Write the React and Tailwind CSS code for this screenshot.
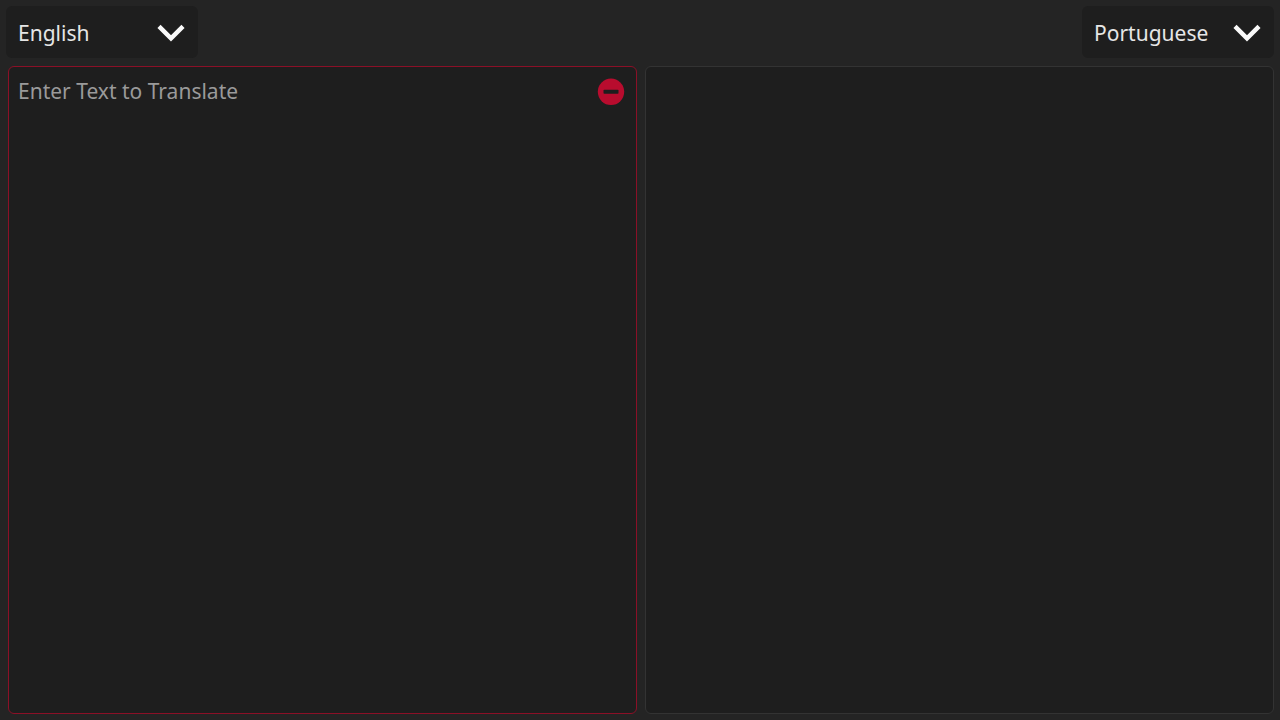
import { useState } from "react";

const LANGUAGES = ["English", "Portuguese", "Spanish", "French", "German", "Italian"];

function LanguageSelect({ label, value, onChange }) {
  return (
    <div className="relative w-48">
      <select
        aria-label={label}
        value={value}
        onChange={(event) => onChange(event.target.value)}
        className="h-13 w-full appearance-none rounded-md bg-[#1e1e1e] pt-1 pr-14 pl-3 text-[21px] text-[#e6e6e6] outline-none"
      >
        {LANGUAGES.map((language) => (
          <option key={language}>{language}</option>
        ))}
      </select>
      <svg
        viewBox="0 0 28 18"
        aria-hidden="true"
        className="pointer-events-none absolute top-[18px] right-[13px] h-[18px] w-7"
      >
        <path
          d="M2 2.4 L14 14.4 L26 2.4"
          fill="none"
          stroke="#fafafa"
          strokeWidth="4.4"
        />
      </svg>
    </div>
  );
}

export default function App() {
  const [source, setSource] = useState("English");
  const [target, setTarget] = useState("Portuguese");
  const [text, setText] = useState("");

  return (
    <div className="flex h-screen flex-col bg-[#242424] font-['Noto_Sans',sans-serif]">
      <header className="flex justify-between px-1.5 pt-1.5 pb-2">
        <LanguageSelect label="Source language" value={source} onChange={setSource} />
        <LanguageSelect label="Target language" value={target} onChange={setTarget} />
      </header>
      <main className="grid flex-1 grid-cols-2 gap-2 pr-1.5 pb-1.5 pl-2">
        <div className="flex items-start rounded-md border border-[#8b1027] bg-[#1e1e1e]">
          <textarea
            aria-label="Text to translate"
            value={text}
            onChange={(event) => setText(event.target.value)}
            placeholder="Enter Text to Translate"
            className="h-full flex-1 resize-none bg-transparent px-[9px] py-2 text-[21px] leading-8 text-[#e6e6e6] outline-none placeholder:text-[#9a9a9a]"
          />
          <button
            type="button"
            aria-label="Clear text"
            onClick={() => setText("")}
            className="mt-[11px] mr-[11px] shrink-0"
          >
            <svg viewBox="0 0 28 28" aria-hidden="true" className="size-7">
              <circle cx="14" cy="13.8" r="13.2" fill="#b80c2e" />
              <rect x="6.5" y="11.8" width="15" height="4" rx="0.8" fill="#1e1e1e" />
            </svg>
          </button>
        </div>
        <div className="flex rounded-md border border-[#333333] bg-[#1e1e1e]">
          <textarea
            aria-label="Translation"
            readOnly
            className="h-full flex-1 resize-none bg-transparent px-[9px] py-2 text-[21px] leading-8 text-[#e6e6e6] outline-none"
          />
        </div>
      </main>
    </div>
  );
}
